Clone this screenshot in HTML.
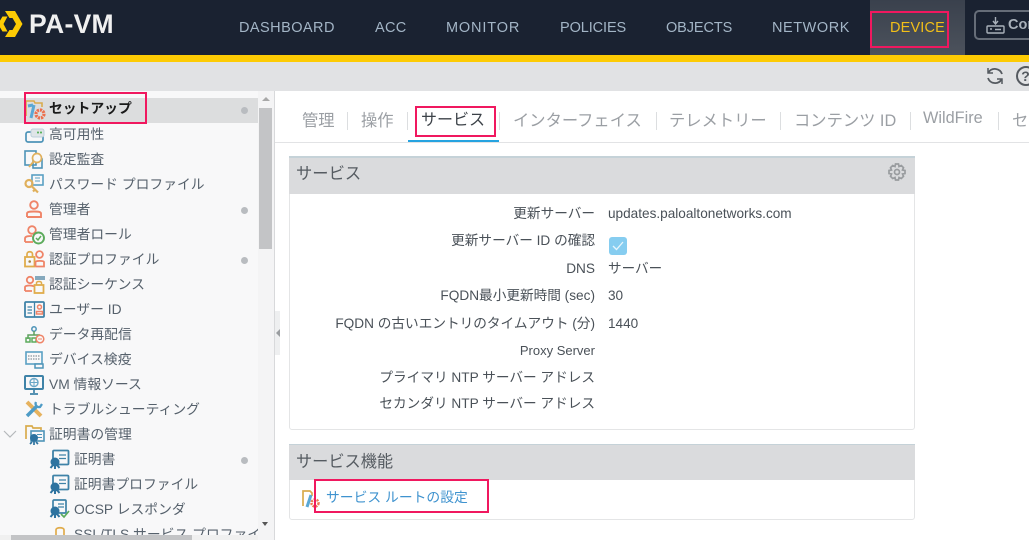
<!DOCTYPE html>
<html lang="ja"><head><meta charset="utf-8"><style>
*{box-sizing:border-box}
html,body{margin:0;padding:0;width:1029px;height:540px;overflow:hidden;background:#fff}
body{position:relative;font-family:"Liberation Sans","Noto Sans CJK JP",sans-serif;color:#4a5560}
.a{position:absolute;white-space:nowrap}
.nav{top:17.5px;font-size:14.5px;line-height:20px;color:#a3b5c6;}
.side{left:49px;font-size:13.8px;line-height:20px;color:#56616c;margin-top:1px}
.dot{position:absolute;left:241px;width:7px;height:7px;border-radius:50%;background:#b9bcc0}
.tab{top:110px;font-size:16.3px;line-height:22px;color:#9b9fa4}
.sep{position:absolute;top:112px;width:1px;height:18px;background:#dcdee0}
.lab{right:434px;font-size:13.65px;line-height:18px;color:#4a5158;text-align:right}
.val{left:608px;font-size:13.6px;line-height:18px;color:#4a5158}
.red{position:absolute;border:2px solid #f0185f;}
svg{position:absolute;overflow:visible}
</style></head><body>
<div class="a" style="left:0;top:0;width:1029px;height:55px;background:#1a2231"></div>
<div class="a" style="left:870px;top:0;width:95px;height:55px;background:linear-gradient(#3a414d,#4c525c)"></div>
<div class="a" style="left:0;top:55px;width:1029px;height:7px;background:#fdcb04"></div>
<div class="a" style="left:0;top:62px;width:1029px;height:29px;background:#e1e2e4"></div>
<svg style="left:0;top:0" width="24" height="40" viewBox="0 0 24 40"><path d="M5 11H15L22.500 24 15 37H5L9.500 30H12.500L16 24 12.500 18H9.500Z" fill="#fdcb04"/><path d="M-2 24L2.500 16.500H7.500L3.500 24 7.500 31.500H2.500Z" fill="#fdcb04"/></svg>
<div class="a" style="left:29px;top:9px;font-size:26.500px;line-height:30px;font-weight:bold;color:#f0f0f0;letter-spacing:.3px">PA-VM</div>
<div class="a nav" style="left:239px;letter-spacing:.45px">DASHBOARD</div>
<div class="a nav" style="left:375px;letter-spacing:.3px">ACC</div>
<div class="a nav" style="left:446px;letter-spacing:.85px">MONITOR</div>
<div class="a nav" style="left:560px;letter-spacing:-.1px">POLICIES</div>
<div class="a nav" style="left:666px;letter-spacing:-.1px">OBJECTS</div>
<div class="a nav" style="left:772px;letter-spacing:.55px">NETWORK</div>
<div class="a nav" style="left:890px;color:#f2bf18;letter-spacing:.15px">DEVICE</div>
<div class="a" style="left:974px;top:10px;width:70px;height:30px;border:2px solid #666d78;border-radius:5px"></div>
<svg style="left:986px;top:16px" width="20" height="20" viewBox="0 0 20 20" fill="none" stroke="#a9b1ba" stroke-width="1.400"><rect x="1" y="10" width="17" height="7" rx="1"/><path d="M9.500 1V7M7 5L9.500 8 12 5M4 13H6M9 13.500H15"/></svg>
<div class="a" style="left:1008px;top:15px;font-size:14.500px;line-height:20px;font-weight:bold;color:#a9b1ba">Cor</div>
<svg style="left:985px;top:66px" width="20" height="20" viewBox="0 0 20 20" fill="none" stroke="#555a60" stroke-width="1.800"><path d="M17 8A7.500 7.500 0 0 0 3.500 6.500M3 12A7.500 7.500 0 0 0 16.500 13.500"/><path d="M3 2V7H8M17 18V13H12" stroke-width="1.500"/></svg>
<div class="a" style="left:1016px;top:66px;width:20px;height:20px;border:2px solid #555a60;border-radius:50%;font-size:14px;line-height:16px;text-align:center;font-weight:bold;color:#555a60;padding-right:1px">?</div>

<div class="a" style="left:0;top:91px;width:258px;height:449px;background:#f8f8f9"></div>
<div class="a" style="left:258px;top:91px;width:17px;height:449px;background:#f4f4f5;border-right:1px solid #d8d9db"></div>
<div class="a" style="left:259px;top:108px;width:13px;height:141px;background:#c3c4c6"></div>
<div class="a" style="left:262px;top:97px;width:0;height:0;border-left:4px solid transparent;border-right:4px solid transparent;border-bottom:4px solid #a8a8a8"></div>
<div class="a" style="left:262px;top:522px;width:0;height:0;border-left:3.500px solid transparent;border-right:3.500px solid transparent;border-top:4px solid #555"></div>
<div class="a" style="left:0;top:535px;width:258px;height:5px;background:#f0f0f0"></div>
<div class="a" style="left:11px;top:535px;width:181px;height:5px;background:#c3c4c6"></div>
<div class="a" style="left:275px;top:311px;width:5px;height:44px;background:#eeeff0"></div>
<div class="a" style="left:276px;top:329px;width:0;height:0;border-top:4px solid transparent;border-bottom:4px solid transparent;border-right:4px solid #9a9da0"></div>

<div class="a" style="left:0;top:98px;width:258px;height:25px;background:#dcddde"></div>
<svg style="left:24px;top:99px" width="22" height="22" viewBox="0 0 22 22" fill="none"><path d="M2 17V2H10L11 4H18V8" stroke="#d9ac4e" stroke-width="1.600"/><path d="M7 19L10 6M4 7L9 6" stroke="#5aa8d4" stroke-width="3"/><circle cx="16" cy="15" r="4" stroke="#ec6f4c" stroke-width="3.200" stroke-dasharray="2.200 .9"/></svg>
<div class="a side" style="top:99px;margin-top:0;color:#1a1a1a;font-weight:bold;">セットアップ</div>
<div class="dot" style="top:107px"></div>

<svg style="left:25px;top:126px" width="20" height="18" viewBox="0 0 20 18" fill="none"><rect x="1" y="6" width="17" height="10" rx="2" stroke="#4e94b8" stroke-width="1.700"/><rect x="6" y="3" width="13" height="8" rx="2" fill="#dfe5e8" stroke="#bcd0da" stroke-width="1"/><path d="M12 6.500H14M15 6.500H17" stroke="#59b35b" stroke-width="1.800"/></svg>
<div class="a side" style="top:124px">高可用性</div>
<svg style="left:24px;top:150px" width="21" height="20" viewBox="0 0 21 20" fill="none"><rect x="1" y="1" width="11" height="14" stroke="#4e94b8" stroke-width="1.600"/><rect x="9" y="9" width="9" height="9" stroke="#4e94b8" stroke-width="1.600"/><circle cx="13" cy="8" r="4.500" fill="#f8f8f9" stroke="#e0b05c" stroke-width="1.700"/><path d="M10 11L5 17" stroke="#e0b05c" stroke-width="1.800"/></svg>
<div class="a side" style="top:149px">設定監査</div>
<svg style="left:24px;top:174px" width="22" height="20" viewBox="0 0 22 20" fill="none"><rect x="8" y="1" width="11" height="10" fill="#f8f8f9" stroke="#5aa0c4" stroke-width="1.600"/><path d="M11 4H16M11 7H16" stroke="#5aa0c4"/><circle cx="5" cy="9.500" r="3.500" stroke="#e0b05c" stroke-width="2.200"/><path d="M7.500 12L14 18.500M11 15.500L9 17.500" stroke="#e0b05c" stroke-width="2.200"/></svg>
<div class="a side" style="top:174px">パスワード プロファイル</div>
<svg style="left:25px;top:200px" width="18" height="18" viewBox="0 0 18 18" fill="none" stroke="#ef8468" stroke-width="1.900"><circle cx="9" cy="5" r="3.800"/><path d="M2 17V13.500C2 12 4 11.500 9 11.500S16 12 16 13.500V17H2"/></svg>
<div class="a side" style="top:199px">管理者</div><div class="dot" style="top:207px"></div>
<svg style="left:24px;top:225px" width="22" height="20" viewBox="0 0 22 20" fill="none"><circle cx="8" cy="5" r="3.800" stroke="#ef8468" stroke-width="1.800"/><path d="M1 17V13.500C1 11.500 3 11 8 11" stroke="#ef8468" stroke-width="1.800"/><path d="M1 17H9" stroke="#ef8468" stroke-width="1.800"/><circle cx="14.500" cy="13" r="5.500" fill="#f8f8f9" stroke="#5cab5c" stroke-width="1.900"/><path d="M12 13L14 15 17 11" stroke="#5cab5c" stroke-width="1.500"/></svg>
<div class="a side" style="top:224px">管理者ロール</div>
<svg style="left:24px;top:250px" width="22" height="18" viewBox="0 0 22 18" fill="none"><rect x="1" y="7" width="9.500" height="9.500" stroke="#e0ac4c" stroke-width="1.800"/><path d="M3 7V4C3 1 8.500 1 8.500 4V7" stroke="#e0ac4c" stroke-width="1.700"/><circle cx="5.700" cy="11.500" r="1.300" fill="#a8863f"/><circle cx="15.500" cy="4.500" r="3.400" stroke="#ef8468" stroke-width="1.800"/><path d="M11.500 16.500V12C11.500 10.500 20 10.500 20 12V16.500H11.500" stroke="#ef8468" stroke-width="1.800"/></svg>
<div class="a side" style="top:249px">認証プロファイル</div><div class="dot" style="top:257px"></div>
<svg style="left:24px;top:275px" width="22" height="19" viewBox="0 0 22 19" fill="none"><circle cx="6" cy="5" r="3.200" stroke="#ef8468" stroke-width="1.800"/><path d="M1 16V12C1 10 10 10 10 12M1 16H8" stroke="#ef8468" stroke-width="1.800"/><rect x="11" y="1" width="10" height="4" fill="#86a9bd"/><rect x="10.500" y="10" width="9" height="8" stroke="#e0ac4c" stroke-width="1.800"/><path d="M12.500 10V8C12.500 6 17.500 6 17.500 8V10" stroke="#e0ac4c" stroke-width="1.500"/></svg>
<div class="a side" style="top:274px">認証シーケンス</div>
<svg style="left:24px;top:301px" width="21" height="18" viewBox="0 0 21 18" fill="none"><rect x="1" y="1" width="19" height="15" rx="1" stroke="#3f83a8" stroke-width="1.800"/><path d="M10.500 1V16M3.500 6H8M3.500 9H8M3.500 12H8" stroke="#3f83a8" stroke-width="1.300"/><circle cx="15.500" cy="6" r="2" stroke="#ef8468" stroke-width="1.500"/><path d="M12.500 13V10.500H18.500V13Z" stroke="#ef8468" stroke-width="1.500"/></svg>
<div class="a side" style="top:299px">ユーザー ID</div>
<svg style="left:25px;top:325px" width="20" height="19" viewBox="0 0 20 19" fill="none"><circle cx="9" cy="4" r="2.200" stroke="#4e94b8" stroke-width="1.500"/><path d="M9 6V10M3 14V10H15" stroke="#5f9f5f" stroke-width="1.500"/><rect x="1" y="13" width="4" height="4" stroke="#5cab5c" stroke-width="1.500"/><rect x="7" y="13" width="4" height="4" stroke="#5cab5c" stroke-width="1.500"/><circle cx="15" cy="14" r="3.800" fill="#f8f8f9" stroke="#ef8468" stroke-width="1.500"/><path d="M13 14H17" stroke="#ef8468"/></svg>
<div class="a side" style="top:324px">データ再配信</div>
<svg style="left:25px;top:351px" width="19" height="18" viewBox="0 0 19 18" fill="none"><rect x="1" y="1" width="16" height="12" stroke="#5aa0c4" stroke-width="1.600"/><path d="M3 5H15M3 8H15" stroke="#9aa4ab" stroke-width="1.500" stroke-dasharray="1.500 1"/><rect x="10" y="13" width="8" height="4" fill="#f8f8f9" stroke="#4e94b8" stroke-width="1.500"/></svg>
<div class="a side" style="top:349px">デバイス検疫</div>
<svg style="left:24px;top:375px" width="20" height="20" viewBox="0 0 20 20" fill="none"><rect x="1" y="1" width="18" height="13" rx="1" stroke="#3f83a8" stroke-width="2"/><circle cx="10" cy="7.500" r="4" stroke="#6aa7c7" stroke-width="1.400"/><path d="M6 7.500H14M10 3.500V11.500" stroke="#6aa7c7"/><path d="M10 14V18M6 19H14" stroke="#3f83a8" stroke-width="1.700"/></svg>
<div class="a side" style="top:374px">VM 情報ソース</div>
<svg style="left:24px;top:399px" width="20" height="20" viewBox="0 0 20 20" fill="none"><path d="M3 3L17 17" stroke="#e6b25e" stroke-width="4"/><path d="M3 17L13 7" stroke="#4e9bc6" stroke-width="3.500"/><path d="M12 3A3.500 3.500 0 0 0 16 8L18 5" stroke="#4e9bc6" stroke-width="2.300"/></svg>
<div class="a side" style="top:399px">トラブルシューティング</div>
<svg style="left:3px;top:430px" width="14" height="8" viewBox="0 0 14 8" fill="none" stroke="#b5b8bb" stroke-width="1.200"><path d="M1 1L7 7 13 1"/></svg>
<svg style="left:24px;top:425px" width="21" height="21" viewBox="0 0 21 21" fill="none"><path d="M2 14V1H8L9 3H17V5" stroke="#d9ac4e" stroke-width="1.700"/><rect x="7" y="6" width="13" height="10" fill="#f8f8f9" stroke="#4e94b8" stroke-width="1.600"/><path d="M13 9.500H18M13 12.500H18" stroke="#4e94b8"/><circle cx="10" cy="13" r="4" fill="#2d73a0"/><path d="M6 19L8 17M10 20V17M14 19L12 17" stroke="#2d73a0" stroke-width="1.700"/></svg>
<div class="a side" style="top:424px">証明書の管理</div>
<svg style="left:49px;top:449px" width="21" height="21" viewBox="0 0 21 21" fill="none"><rect x="4" y="1.500" width="15.500" height="14" rx="1" fill="#f8f8f9" stroke="#3f83a8" stroke-width="1.800"/><path d="M10 6H17M10 9.500H17" stroke="#3f83a8" stroke-width="1.200"/><circle cx="6" cy="13" r="4.500" fill="#2d73a0"/><path d="M1.500 19L4 16M6 20V16M10.500 19L8 16" stroke="#2d73a0" stroke-width="2"/></svg>
<div class="a side" style="left:74px;top:449px">証明書</div><div class="dot" style="top:457px"></div>
<svg style="left:49px;top:474px" width="21" height="21" viewBox="0 0 21 21" fill="none"><rect x="4" y="1.500" width="15.500" height="14" rx="1" fill="#f8f8f9" stroke="#3f83a8" stroke-width="1.800"/><path d="M10 6H17M10 9.500H17" stroke="#3f83a8" stroke-width="1.200"/><circle cx="6" cy="13" r="4.500" fill="#2d73a0"/><path d="M1.500 19L4 16M6 20V16M10.500 19L8 16" stroke="#2d73a0" stroke-width="2"/></svg>
<div class="a side" style="left:74px;top:474px">証明書プロファイル</div>
<svg style="left:49px;top:499px" width="21" height="20" viewBox="0 0 21 20" fill="none"><rect x="4" y="1" width="13" height="13" rx="1" fill="#f8f8f9" stroke="#3f83a8" stroke-width="1.700"/><path d="M9 5H15M9 8H15" stroke="#3f83a8" stroke-width="1.200"/><circle cx="6" cy="12" r="4.500" fill="#2d73a0"/><path d="M1.500 18L4 15M6 19V15M10.500 18L8 15" stroke="#2d73a0" stroke-width="2"/><path d="M12 15L15 18 20 12" stroke="#5cab5c" stroke-width="1.700"/></svg>
<div class="a side" style="left:74px;top:499px">OCSP レスポンダ</div>
<svg style="left:54px;top:526px" width="12" height="9" viewBox="0 0 12 9" fill="none" stroke="#e0ac4c" stroke-width="1.700"><path d="M2 9V4C2 1 10 1 10 4V9"/></svg>
<div class="a" style="left:0;top:524px;width:258px;height:11px;overflow:hidden"><div class="a side" style="left:74px;top:0">SSL/TLS サービス プロファイル</div></div>

<div class="a" style="left:275px;top:142px;width:754px;height:1px;background:#e2e3e5"></div>
<div class="a tab" style="left:302px">管理</div><div class="sep" style="left:347px"></div>
<div class="a tab" style="left:361px">操作</div><div class="sep" style="left:407px"></div>
<div class="a tab" style="left:421px;color:#3c4248;font-size:16px">サービス</div><div class="sep" style="left:499px"></div>
<div class="a tab" style="left:513px">インターフェイス</div><div class="sep" style="left:656px"></div>
<div class="a tab" style="left:669px">テレメトリー</div><div class="sep" style="left:780px"></div>
<div class="a tab" style="left:794px">コンテンツ ID</div><div class="sep" style="left:910px"></div>
<div class="a tab" style="left:923px;top:107px;">WildFire</div><div class="sep" style="left:998px"></div>
<div class="a tab" style="left:1012px">セ</div>
<div class="a" style="left:408px;top:140px;width:91px;height:2px;background:#26a3e0"></div>

<div class="a" style="left:289px;top:156px;width:626px;height:274px;border:1px solid #e4e5e6;border-radius:3px;background:#fff"></div>
<div class="a" style="left:289px;top:156px;width:626px;height:38px;background:#dadbdd;border-top:2px solid #c5d2d8"></div>
<div class="a" style="left:296px;top:162px;font-size:16.300px;line-height:24px;color:#555b61">サービス</div>
<svg style="left:888px;top:163px" width="18" height="18" viewBox="0 0 18 18" fill="none" stroke="#999c9f" stroke-width="1.700"><path d="M7.500 1H10.500L11 3.500 13.300 2.500 15.500 4.700 14.500 7 17 7.500V10.500L14.500 11 15.500 13.300 13.300 15.500 11 14.500 10.500 17H7.500L7 14.500 4.700 15.500 2.500 13.300 3.500 11 1 10.500V7.500L3.500 7 2.500 4.700 4.700 2.500 7 3.500Z"/><circle cx="9" cy="9" r="2.500"/></svg>

<div class="a lab" style="top:205px">更新サーバー</div><div class="a val" style="top:205px">updates.paloaltonetworks.com</div>
<div class="a lab" style="top:232px">更新サーバー ID の確認</div>
<div class="a" style="left:609px;top:237px;width:18px;height:18px;border-radius:3px;background:#86cdf0"></div>
<svg style="left:612px;top:241px" width="12" height="10" viewBox="0 0 12 10" fill="none" stroke="#e8f6fc" stroke-width="1.300"><path d="M1 5L4.500 8.500 11 1"/></svg>
<div class="a lab" style="top:260px">DNS</div><div class="a val" style="top:260px">サーバー</div>
<div class="a lab" style="top:287px">FQDN最小更新時間 (sec)</div><div class="a val" style="top:287px">30</div>
<div class="a lab" style="top:315px">FQDN の古いエントリのタイムアウト (分)</div><div class="a val" style="top:315px">1440</div>
<div class="a lab" style="top:342px;font-size:13px">Proxy Server</div>
<div class="a lab" style="top:369px">プライマリ NTP サーバー アドレス</div>
<div class="a lab" style="top:395px">セカンダリ NTP サーバー アドレス</div>

<div class="a" style="left:289px;top:444px;width:626px;height:76px;border:1px solid #e4e5e6;border-radius:3px;background:#fff"></div>
<div class="a" style="left:289px;top:444px;width:626px;height:36px;background:#dadbdd;border-top:1px solid #c5d2d8"></div>
<div class="a" style="left:296px;top:451px;font-size:16.200px;line-height:22px;color:#555b61">サービス機能</div>
<svg style="left:301px;top:489px" width="20" height="21" viewBox="0 0 20 21" fill="none"><path d="M2 17V2H9L11 4V7" stroke="#d9ac4e" stroke-width="1.700"/><path d="M6 18L10 6" stroke="#5aa8d4" stroke-width="3"/><circle cx="14" cy="14" r="3.500" stroke="#ec7a55" stroke-width="2.500" stroke-dasharray="2 1"/></svg>
<div class="a" style="left:326px;top:488px;font-size:13.800px;line-height:19px;color:#3f93cf">サービス ルートの設定</div>

<div class="red" style="left:24px;top:92px;width:123px;height:32px"></div>
<div class="red" style="left:870px;top:11px;width:79px;height:37px"></div>
<div class="red" style="left:415px;top:106px;width:81px;height:31px"></div>
<div class="red" style="left:314px;top:479px;width:175px;height:34px"></div>
</body></html>
